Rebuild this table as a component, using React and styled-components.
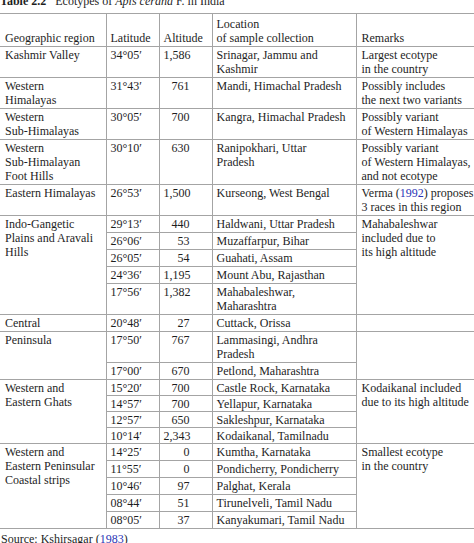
import React from "react";
import styled, { createGlobalStyle } from "styled-components";

const Global = createGlobalStyle`
  html, body { margin: 0; padding: 0; background: #fff; }
  body {
    font-family: "Liberation Serif", "Times New Roman", serif;
    color: #1e1e1e;
    overflow: hidden;
  }
`;

const Page = styled.div`
  width: 474px;
  height: 543px;
  overflow: hidden;
  display: flex;
  flex-direction: column;
`;

const Title = styled.div`
  font-size: 12px;
  line-height: 14px;
  margin-top: -6px;
  margin-bottom: 5px;
  white-space: pre;
  i { font-style: italic; }
`;

const Label = styled.b`
  font-weight: bold;
  margin-right: 9px;
`;

const Table = styled.table`
  width: 474px;
  border-collapse: collapse;
  table-layout: fixed;
  font-size: 12px;
  line-height: 14px;
`;

const Col = styled.col`
  width: ${(p) => p.$w}px;
`;

const HeadCell = styled.th`
  font-weight: normal;
  text-align: left;
  vertical-align: bottom;
  padding: 3px 4px 1px ${(p) => p.$pl ?? 4}px;
  border-top: 1px solid #a4a4a4;
  border-bottom: 1px solid #a4a4a4;
  border-left: ${(p) => (p.$first ? "none" : "1px solid #a4a4a4")};
  white-space: pre;
  overflow: visible;
`;

const Cell = styled.td`
  vertical-align: top;
  text-align: ${(p) => (p.$right ? "right" : "left")};
  padding: 1px ${(p) => (p.$right ? 22 : 2)}px ${(p) => (p.$tight ? 0 : 1)}px
    ${(p) => p.$pl ?? 4}px;
  border-bottom: 1px solid #a4a4a4;
  border-left: ${(p) => (p.$first ? "none" : "1px solid #a4a4a4")};
  white-space: pre;
  overflow: visible;
`;

const Ref = styled.span`
  color: #2a33b5;
`;

const Source = styled.div`
  font-size: 12px;
  line-height: 14px;
  margin-top: 3px;
  padding-left: 1px;
`;

const groups = [
  {
    region: "Kashmir Valley",
    remark: "Largest ecotype\nin the country",
    rows: [["34°05′", "1,586", "Srinagar, Jammu and\nKashmir"]],
  },
  {
    region: "Western\nHimalayas",
    remark: "Possibly includes\nthe next two variants",
    rows: [["31°43′", "761", "Mandi, Himachal Pradesh"]],
  },
  {
    region: "Western\nSub-Himalayas",
    remark: "Possibly variant\nof Western Himalayas",
    rows: [["30°05′", "700", "Kangra, Himachal Pradesh"]],
  },
  {
    region: "Western\nSub-Himalayan\nFoot Hills",
    remark: "Possibly variant\nof Western Himalayas,\nand not ecotype",
    rows: [["30°10′", "630", "Ranipokhari, Uttar\nPradesh"]],
  },
  {
    region: "Eastern Himalayas",
    remark: (
      <>
        Verma (<Ref>1992</Ref>) proposes{"\n"}3 races in this region
      </>
    ),
    rows: [["26°53′", "1,500", "Kurseong, West Bengal"]],
  },
  {
    region: "Indo-Gangetic\nPlains and Aravali\nHills",
    remark: "Mahabaleshwar\nincluded due to\nits high altitude",
    rows: [
      ["29°13′", "440", "Haldwani, Uttar Pradesh"],
      ["26°06′", "53", "Muzaffarpur, Bihar"],
      ["26°05′", "54", "Guahati, Assam"],
      ["24°36′", "1,195", "Mount Abu, Rajasthan"],
      ["17°56′", "1,382", "Mahabaleshwar,\nMaharashtra"],
    ],
  },
  {
    region: "Central",
    remark: "",
    rows: [["20°48′", "27", "Cuttack, Orissa"]],
  },
  {
    region: "Peninsula",
    remark: "",
    rows: [
      ["17°50′", "767", "Lammasingi, Andhra\nPradesh"],
      ["17°00′", "670", "Petlond, Maharashtra"],
    ],
  },
  {
    region: "Western and\nEastern Ghats",
    remark: "Kodaikanal included\ndue to its high altitude",
    tight: true,
    rows: [
      ["15°20′", "700", "Castle Rock, Karnataka"],
      ["14°57′", "700", "Yellapur, Karnataka"],
      ["12°57′", "650", "Sakleshpur, Karnataka"],
      ["10°14′", "2,343", "Kodaikanal, Tamilnadu"],
    ],
  },
  {
    region: "Western and\nEastern Peninsular\nCoastal strips",
    remark: "Smallest ecotype\nin the country",
    rows: [
      ["14°25′", "0", "Kumtha, Karnataka"],
      ["11°55′", "0", "Pondicherry, Pondicherry"],
      ["10°46′", "97", "Palghat, Kerala"],
      ["08°44′", "51", "Tirunelveli, Tamil Nadu"],
      ["08°05′", "37", "Kanyakumari, Tamil Nadu"],
    ],
  },
];

export default function App() {
  return (
    <Page>
      <Global />
      <Title>
        <Label>Table 2.2</Label>
        Ecotypes of <i>Apis cerana</i> F. in India
      </Title>
      <Table>
        <colgroup>
          <Col $w={106} />
          <Col $w={53} />
          <Col $w={53} />
          <Col $w={144} />
          <Col $w={118} />
        </colgroup>
        <thead>
          <tr>
            <HeadCell $first $pl={5}>Geographic region</HeadCell>
            <HeadCell>Latitude</HeadCell>
            <HeadCell>Altitude</HeadCell>
            <HeadCell>{"Location\nof sample collection"}</HeadCell>
            <HeadCell $pl={5}>Remarks</HeadCell>
          </tr>
        </thead>
        <tbody>
          {groups.map((g) =>
            g.rows.map((r, i) => (
              <tr key={g.region + i}>
                {i === 0 && (
                  <Cell $first $pl={5} $tight={g.tight} rowSpan={g.rows.length}>
                    {g.region}
                  </Cell>
                )}
                <Cell $tight={g.tight}>{r[0]}</Cell>
                <Cell $right $tight={g.tight}>{r[1]}</Cell>
                <Cell $tight={g.tight}>{r[2]}</Cell>
                {i === 0 && (
                  <Cell $pl={5} $tight={g.tight} rowSpan={g.rows.length}>
                    {g.remark}
                  </Cell>
                )}
              </tr>
            ))
          )}
        </tbody>
      </Table>
      <Source>
        Source: Kshirsagar (<Ref>1983</Ref>)
      </Source>
    </Page>
  );
}
